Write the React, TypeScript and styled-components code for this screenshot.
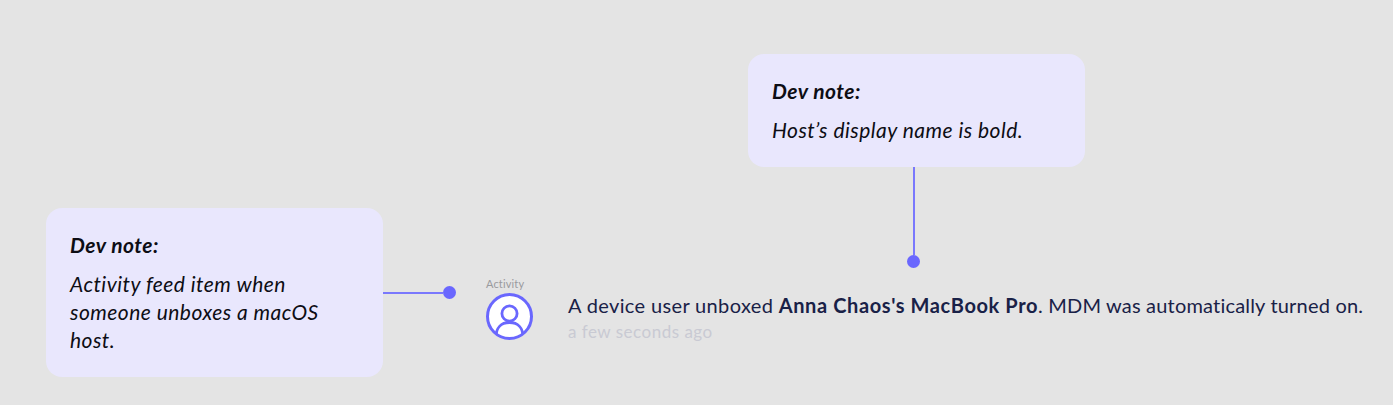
import React from "react";
import styled, { createGlobalStyle } from "styled-components";

const Global = createGlobalStyle`
  html, body { margin: 0; padding: 0; background: #e4e4e4; }
  body { font-family: "Lato", "Open Sans", sans-serif; }
`;

const Canvas = styled.main`
  width: 1393px;
  height: 405px;
  overflow: hidden;
  display: flex;
  padding: 54px 0 0 46px;
  box-sizing: border-box;
  background: #e4e4e4;
`;

const LeftGroup = styled.div`
  display: flex;
  align-items: center;
  align-self: flex-start;
  margin-top: 154px;
  width: 410px;
  flex: none;
`;

const RightColumn = styled.div`
  margin-left: 30px;
  display: flex;
  flex-direction: column;
  align-items: flex-start;
`;

const Note = styled.aside`
  box-sizing: border-box;
  width: 337px;
  padding: 23px 30px 23px 24px;
  background: #e9e7fd;
  border-radius: 16px;
  color: #0d0d14;
  font-style: italic;
  font-size: 21px;
  line-height: 28px;
  letter-spacing: 0.48px;
  flex: none;
`;

const NoteTitle = styled.p`
  margin: 0 0 11px;
  font-weight: 700;
`;

const NoteText = styled.p`
  margin: 0;
`;

const HLine = styled.div`
  width: 60px;
  height: 2px;
  background: #7a78fd;
  flex: none;
`;

const Dot = styled.span`
  display: block;
  width: 13px;
  height: 13px;
  border-radius: 50%;
  background: #6a67fe;
  flex: none;
`;

const TopGroup = styled.div`
  margin-left: 262px;
  display: flex;
  flex-direction: column;
`;

const VLineWrap = styled.div`
  width: 13px;
  margin-left: 159px;
  display: flex;
  flex-direction: column;
  align-items: center;
`;

const VLine = styled.div`
  width: 2px;
  height: 88px;
  background: #7a78fd;
`;

const FeedItem = styled.div`
  margin-top: 10px;
  display: flex;
  align-items: flex-start;
  gap: 35px;
`;

const AvatarCol = styled.div`
  display: flex;
  flex-direction: column;
  width: 47px;
`;

const AvatarLabel = styled.span`
  font-size: 11px;
  line-height: 12px;
  letter-spacing: 0.15px;
  color: #9a9a9e;
  margin-bottom: 3px;
`;

const Body = styled.div`
  padding-top: 13px;
  color: #192147;
`;

const Message = styled.p`
  margin: 0;
  font-size: 20px;
  line-height: 28px;
  white-space: nowrap;
  letter-spacing: 0.36px;
`;

const HostName = styled.b`
  font-weight: 700;
  letter-spacing: 0.6px;
`;

const MessageTail = styled.span`
  letter-spacing: 0.19px;
`;

const Time = styled.p`
  margin: 1px 0 0;
  font-size: 17px;
  line-height: 24px;
  letter-spacing: 0.5px;
  color: #c9cad3;
`;

const Avatar = () => (
  <svg width="47" height="47" viewBox="0 0 47 47" fill="none">
    <defs>
      <clipPath id="av"><circle cx="23.5" cy="23.5" r="21.5" /></clipPath>
    </defs>
    <circle cx="23.5" cy="23.5" r="22" fill="#fff" />
    <g clipPath="url(#av)" stroke="#6a67fe" strokeWidth="2.8">
      <circle cx="23.5" cy="20.5" r="7.6" />
      <path d="M10 44c0-9 5-14.5 13.5-14.5S37 35 37 44" />
    </g>
    <circle cx="23.5" cy="23.5" r="22" stroke="#6a67fe" strokeWidth="3" />
  </svg>
);

export default function App() {
  return (
    <Canvas>
      <Global />
      <LeftGroup>
        <Note>
          <NoteTitle>Dev note:</NoteTitle>
          <NoteText>Activity feed item when someone unboxes a macOS host.</NoteText>
        </Note>
        <HLine />
        <Dot />
      </LeftGroup>
      <RightColumn>
        <TopGroup>
          <Note>
            <NoteTitle>Dev note:</NoteTitle>
            <NoteText>Host’s display name is bold.</NoteText>
          </Note>
          <VLineWrap>
            <VLine />
            <Dot />
          </VLineWrap>
        </TopGroup>
        <FeedItem>
          <AvatarCol>
            <AvatarLabel>Activity</AvatarLabel>
            <Avatar />
          </AvatarCol>
          <Body>
            <Message>
              A device user unboxed <HostName>Anna Chaos's MacBook Pro</HostName>
              <MessageTail>. MDM was automatically turned on.</MessageTail>
            </Message>
            <Time>a few seconds ago</Time>
          </Body>
        </FeedItem>
      </RightColumn>
    </Canvas>
  );
}
